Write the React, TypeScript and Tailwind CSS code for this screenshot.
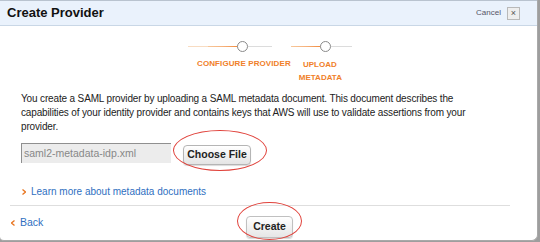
import React from "react";

const Caret: React.FC = () => (
  <svg width="4" height="6" viewBox="0 0 4 6" className="shrink-0">
    <path d="M0.5 0.5 L3.5 3 L0.5 5.5" fill="none" stroke="#e8741e" strokeWidth="1.3" />
  </svg>
);

const BackCaret: React.FC = () => (
  <svg width="4" height="6" viewBox="0 0 4 6" className="shrink-0">
    <path d="M3.5 0.5 L0.5 3 L3.5 5.5" fill="none" stroke="#e8741e" strokeWidth="1.3" />
  </svg>
);

const StepDot: React.FC = () => (
  <div className="relative flex items-center">
    <div className="h-px w-[30px] bg-gradient-to-r from-[#f7c79a] via-[#f6b27c] to-[#f08a3a]" />
    <div className="w-[11px] h-[11px] rounded-full border border-[#8a8a8a] bg-white -ml-px" />
  </div>
);

const App: React.FC = () => {
  return (
    <div className="w-[540px] h-[242px] bg-[#9e9e9e] font-['Liberation_Sans',Arial,sans-serif]">
      <div className="w-[538px] h-[241px] bg-white rounded-br-[6px] rounded-bl-[4px] border-r border-b border-[#a9a9a9] flex flex-col overflow-hidden relative">
        {/* header */}
        <div className="h-[26px] shrink-0 bg-[#eaf2fc] border-b border-[#c9d7e6] border-t border-t-[#b9c3cf] flex items-center justify-between pl-[7px] pr-[17px]">
          <div className="text-[13px] font-bold text-[#111]">Create Provider</div>
          <div className="flex items-center gap-[6px]">
            <span className="text-[8px] text-[#556]">Cancel</span>
            <div className="w-[13px] h-[13px] border border-[#b9b9b9] bg-[#eee] flex items-center justify-center text-[9px] leading-none text-[#555]">
              ×
            </div>
          </div>
        </div>

        {/* steps */}
        <div className="pt-[15px] pl-[188px] flex">
          <div className="flex flex-col items-start">
            <div className="flex items-center">
              <div className="h-px w-[20px] bg-[#f8dcc2]" />
              <StepDot />
              <div className="h-px w-[24px] bg-[#dcdcdc]" />
            </div>
            <div className="text-[8px] font-bold text-[#f0802a] mt-[6px] ml-[9px] tracking-[0.1px]">
              CONFIGURE PROVIDER
            </div>
          </div>
          <div className="flex flex-col items-start">
            <div className="flex items-center">
              <StepDot />
              <div className="h-px w-[21px] bg-[#dcdcdc]" />
            </div>
            <div className="text-[8px] font-bold text-[#f0802a] mt-[6px] ml-[13px] leading-[13px] text-center w-[42px] -translate-x-[5px]">
              UPLOAD
              <br />
              METADATA
            </div>
          </div>
        </div>

        {/* body */}
        <div className="pl-[21px] pr-[42px] mt-[8px] text-[10px] tracking-[-0.15px] leading-[14px] text-[#222]">
          You create a SAML provider by uploading a SAML metadata document. This document describes the
          capabilities of your identity provider and contains keys that AWS will use to validate assertions from your
          provider.
        </div>

        <div className="pl-[21px] mt-[7px] flex items-center gap-[12px] relative">
          <div className="w-[150px] h-[20px] bg-[#ececec] border-t border-l border-[#8f8f8f] text-[10.5px] text-[#888] flex items-center pl-[2px]">
            saml2-metadata-idp.xml
          </div>
          <div className="relative">
            <button className="h-[20px] w-[68px] rounded-[4px] border border-[#b5b5b5] bg-gradient-to-b from-white to-[#e4e4e4] text-[10.5px] font-bold text-[#222] shadow-[0_1px_1px_rgba(0,0,0,0.15)]">
              Choose File
            </button>
            <div className="absolute left-[-10px] top-[-11px] w-[94px] h-[41px] rounded-[50%] border-[1.5px] border-[#e0413a] pointer-events-none" />
          </div>
        </div>

        <div className="pl-[22px] mt-[19px] flex items-center gap-[5px] text-[10px] text-[#2f6fbf]">
          <Caret />
          <span>Learn more about metadata documents</span>
        </div>

        <div className="mx-[10px] mt-[6px] border-t border-[#dedede] w-[500px]" />

        <div className="relative flex items-center h-[30px]">
          <div className="pl-[11px] pt-[4px] flex items-center gap-[5px] text-[10.5px] text-[#2f6fbf]">
            <BackCaret />
            <span>Back</span>
          </div>
          <div className="absolute left-[246px] top-[7px]">
            <button className="h-[22px] w-[47px] rounded-[4px] border border-[#c0c0c0] bg-gradient-to-b from-white to-[#e6e6e6] text-[10.5px] font-bold text-[#222] shadow-[0_1px_1px_rgba(0,0,0,0.15)]">
              Create
            </button>
            <div className="absolute left-[-9px] top-[-11px] w-[65px] h-[38px] rounded-[50%] border-[1.5px] border-[#e0413a] pointer-events-none" />
          </div>
        </div>
      </div>
    </div>
  );
};

export default App;
